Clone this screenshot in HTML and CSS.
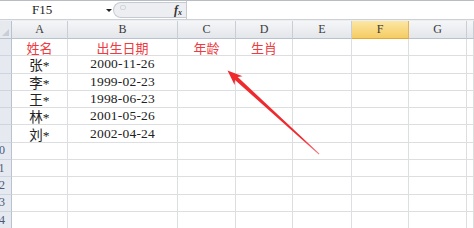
FILE: index.html
```html
<!DOCTYPE html>
<html lang="zh-CN">

<head>
    <meta charset="UTF-8">
    <meta name="viewport" content="width=device-width, initial-scale=1.0">
    <title>出生日期表</title>
    <link rel="stylesheet" href="styles.css">
</head>

<body>
    <div class="sheet">
        <div class="formula-bar">
            <div class="name-box">
                <span class="name-text">F15</span>
                <span class="drop"></span>
            </div>
            <div class="fx-group">
                <span class="grip"></span>
                <span class="fx">f<sub>x</sub></span>
            </div>
            <div class="formula-input"></div>
        </div>

        <div class="grid">
        </div>

        <svg class="arrow" width="474" height="228" viewBox="0 0 474 228">
            <defs>
                <linearGradient id="fade" x1="227" y1="70" x2="320" y2="154" gradientUnits="userSpaceOnUse">
                    <stop offset="0" stop-color="#ef2a2e" />
                    <stop offset="0.8" stop-color="#ef2a2e" />
                    <stop offset="1" stop-color="#f27c88" />
                </linearGradient>
            </defs>
            <polygon fill="url(#fade)"
                points="227.5,70.5 234.6,85 235,80.1 318.8,154.4 319.5,153.7 237.7,77.1 242.6,76.2" />
        </svg>
    </div>

    <script>
        (
            () => {
                const cols = ['A', 'B', 'C', 'D', 'E', 'F', 'G', ''],
                    people = [
                        ['张*', '2000-11-26'],
                        ['李*', '1999-02-23'],
                        ['王*', '1998-06-23'],
                        ['林*', '2001-05-26'],
                        ['刘*', '2002-04-24']
                    ],
                    grid = document.querySelector('.grid')

                // 表头那一行
                function headTpl() {
                    let html = '<div class="corner"><span class="tri"></span></div>'
                    cols.forEach(c => {
                        html += `<div class="col-head${c === 'F' ? ' active' : ''}">${c}</div>`
                    })
                    return html
                }

                function rowTpl(num, values) {
                    let html = `<div class="row-head">${num}</div>`
                    cols.forEach((c, i) => {
                        const v = values[i] || ''
                        html += `<div class="cell">${v}</div>`
                    })
                    return html
                }

                function render() {
                    let html = headTpl()
                    // 第 4 行是标题
                    html += rowTpl(4, [
                        '<span class="red">姓名</span>',
                        '<span class="red">出生日期</span>',
                        '<span class="red">年龄</span>',
                        '<span class="red">生肖</span>'
                    ])
                    people.forEach((p, i) => {
                        html += rowTpl(5 + i, p)
                    })
                    for (let n = 10; n <= 14; n++) {
                        html += rowTpl(n, [])
                    }
                    grid.innerHTML = html
                }

                render()
            }
        )();
    </script>
</body>

</html>
```

FILE: styles.css
```css
body {
    margin: 0;
}

.sheet {
    position: relative;
    width: 474px;
    height: 228px;
    overflow: hidden;
    background: #fff;
    font-family: "Liberation Serif", "Noto Sans CJK SC", serif;
    color: #222;
}

/* 编辑栏 */
.formula-bar {
    display: flex;
    height: 18px;
    border-top: 1px solid #b8bdc4;
    border-bottom: 1px solid #cdd1d7;
    box-shadow: 0 1px 0 #eceef1;
}

.name-box {
    display: flex;
    align-items: center;
    width: 113px;
    box-sizing: border-box;
    background: #fff;
    font-size: 13px;
}

.name-text {
    padding-left: 32px;
}

.drop {
    margin-left: 54px;
    margin-top: 1px;
    width: 0;
    height: 0;
    border-left: 3px solid transparent;
    border-right: 3px solid transparent;
    border-top: 3px solid #222;
}

.fx-group {
    display: flex;
    align-items: center;
    justify-content: space-between;
    width: 73px;
    margin: 1px 0;
    padding: 0 4px 0 6px;
    box-sizing: border-box;
    background: #eceef1;
    border: 1px solid #c6cbd2;
    border-right: none;
    border-radius: 9px 0 0 9px;
}

.grip {
    width: 4px;
    height: 3px;
    border-radius: 2px;
    border: 1px solid #d2d6dc;
    margin-top: -5px;
}

.fx {
    font-style: italic;
    font-weight: bold;
    font-size: 12px;
    color: #333;
    line-height: 1;
}

.fx sub {
    font-size: 8px;
    vertical-align: -1px;
}

.formula-input {
    flex: 1;
    background: #fff;
    border-left: 1px solid #c6cbd2;
}

/* 表格 */
.grid {
    display: grid;
    grid-template-columns: 12px 56px 110px 58px 57px 59px 57px 58px 7px;
    grid-template-rows: 18px;
    grid-auto-rows: 17.3px;
    margin-top: 1px;
}

.grid div {
    display: flex;
    align-items: center;
    justify-content: center;
    box-sizing: border-box;
    overflow: hidden;
    white-space: nowrap;
}

.corner {
    position: relative;
    background: #e6e9ee;
    border-right: 1px solid #b9c3cf;
    border-bottom: 1px solid #b9c3cf;
}

.corner .tri {
    position: absolute;
    right: 2px;
    bottom: 2px;
    width: 0;
    height: 0;
    border-left: 7px solid transparent;
    border-bottom: 7px solid #c9ced6;
}

.col-head {
    background: linear-gradient(#f5f6f8, #e3e6ea);
    border-right: 1px solid #c9ced6;
    border-bottom: 1px solid #b9c3cf;
    font-size: 12px;
    color: #3a3a3a;
}

.col-head.active {
    background: linear-gradient(#fce7a4, #f5cc62);
    border-right-color: #e2b457;
    border-bottom-color: #e0a93c;
}

.grid .row-head {
    justify-content: flex-start;
    text-indent: -7px;
    background: #e6eaf0;
    border-right: 1px solid #b9c3cf;
    border-bottom: 1px solid #cdd5df;
    font-size: 12px;
    color: #4a5a78;
}

.cell {
    border-right: 1px solid #dcdee0;
    border-bottom: 1px solid #dcdee0;
    font-size: 13.5px;
    letter-spacing: 0.2px;
}

.red {
    color: #ee3a40;
    font-size: 13px;
    letter-spacing: 0;
}

.arrow {
    position: absolute;
    left: 0;
    top: 0;
    pointer-events: none;
}
```
